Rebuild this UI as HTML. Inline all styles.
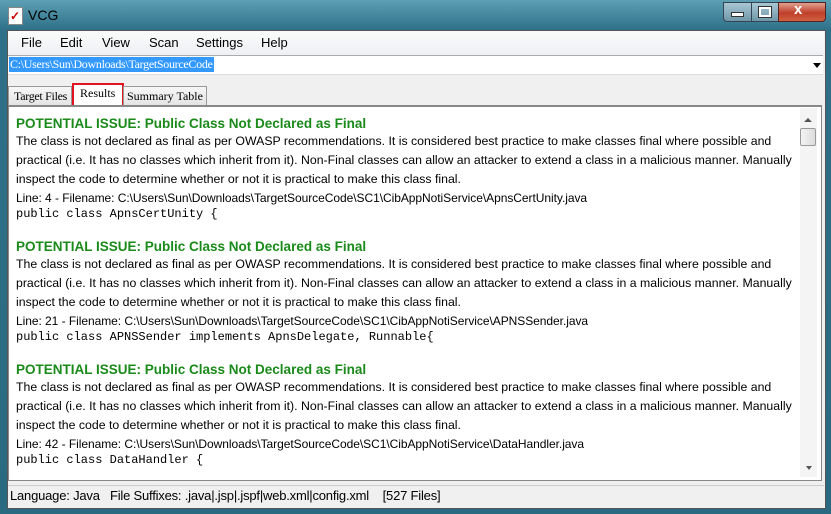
<!DOCTYPE html><html><head><style>
body{margin:0;width:831px;height:514px;overflow:hidden;background:#2f6e84;font-family:"Liberation Sans",sans-serif;position:relative}
.abs{position:absolute}
#frame{left:0;top:0;width:831px;height:514px;background:linear-gradient(#5d9fb3,#2e7088 30px,#2a6a80);}
#client{left:7px;top:30px;width:817px;height:477px;background:#f0f0f0;border:1px solid #555}
.t{position:absolute;white-space:nowrap}
.tx{font-size:12.3px;color:#000;left:16px}
.h{font-size:13.5px;font-weight:bold;color:#1a8a1a;left:16px}
.ln{font-size:12px;left:16px;letter-spacing:-0.05px}
.cd{font-family:"Liberation Mono",monospace;font-size:12px;left:16px}
</style></head><body>
<div class="abs" id="frame"></div>
<div class="abs" style="left:8px;top:7px;width:13px;height:16px;background:#fff;border:1px solid #888"></div>
<div class="abs" style="left:10px;top:9px;color:#c00;font-size:12px;font-weight:bold">✓</div>
<div class="t" style="left:28px;top:7px;font-size:14px;color:#000">VCG</div>
<div class="abs" style="left:723px;top:2px;width:27px;height:18px;border:1px solid #345;border-radius:0 0 0 4px;background:linear-gradient(#a9c6d3,#6f97a8)"></div>
<div class="abs" style="left:731px;top:12px;width:11px;height:3px;background:#fff;border:1px solid #333"></div>
<div class="abs" style="left:751px;top:2px;width:26px;height:18px;border:1px solid #345;background:linear-gradient(#a9c6d3,#6f97a8)"></div>
<div class="abs" style="left:759px;top:7px;width:8px;height:6px;border:2px solid #fff;outline:1px solid #333"></div>
<div class="abs" style="left:778px;top:2px;width:46px;height:18px;border:1px solid #522;border-radius:0 0 4px 0;background:linear-gradient(#e0a090,#c0402a 55%,#d06040)"></div>
<div class="t" style="left:794px;top:1px;color:#fff;font-weight:bold;font-size:15px">x</div>
<div class="abs" id="client"></div>
<div class="abs" style="left:8px;top:31px;width:816px;height:24px;background:linear-gradient(#fbfbfb,#eef0f3)"></div>
<div class="t" style="left:21px;top:35px;font-size:13px">File</div>
<div class="t" style="left:60px;top:35px;font-size:13px">Edit</div>
<div class="t" style="left:102px;top:35px;font-size:13px">View</div>
<div class="t" style="left:149px;top:35px;font-size:13px">Scan</div>
<div class="t" style="left:196px;top:35px;font-size:13px">Settings</div>
<div class="t" style="left:261px;top:35px;font-size:13px">Help</div>
<div class="abs" style="left:8px;top:55px;width:815px;height:18px;background:#fff;border-top:1px solid #aaa;border-bottom:1px solid #ddd"></div>
<div class="t" style="left:9px;top:57px;font-family:'Liberation Serif',serif;font-size:12px;background:#3399ff;color:#fff;padding:0 1px;letter-spacing:-0.3px">C:\Users\Sun\Downloads\TargetSourceCode</div>
<div class="abs" style="left:813px;top:63px;width:0;height:0;border-left:4px solid transparent;border-right:4px solid transparent;border-top:5px solid #000"></div>
<div class="abs" style="left:8px;top:86px;width:62px;height:19px;background:linear-gradient(#f7f7f7,#e3e3e3);border:1px solid #999;border-bottom:none"></div>
<div class="t" style="left:14px;top:89px;font-family:'Liberation Serif',serif;font-size:12px;letter-spacing:-0.3px">Target Files</div>
<div class="abs" style="left:72px;top:83px;width:48px;height:21px;background:#fff;border:2px solid #e0141e"></div>
<div class="t" style="left:80px;top:86px;font-family:'Liberation Serif',serif;font-size:12px">Results</div>
<div class="abs" style="left:123px;top:86px;width:82px;height:19px;background:linear-gradient(#f7f7f7,#e3e3e3);border:1px solid #999;border-bottom:none"></div>
<div class="t" style="left:127px;top:89px;font-family:'Liberation Serif',serif;font-size:12px">Summary Table</div>
<div class="abs" style="left:8px;top:105px;width:812px;height:373px;background:#fff;border:1px solid #888;border-top:2px solid #888"></div>
<div id="c"></div>
<div class="abs" style="left:800px;top:108px;width:17px;height:369px;background:#f4f4f4"></div>
<div class="abs" style="left:804px;top:118px;width:0;height:0;border-left:4px solid transparent;border-right:4px solid transparent;border-bottom:4px solid #555"></div>
<div class="abs" style="left:800px;top:128px;width:14px;height:16px;background:linear-gradient(90deg,#f3f3f3,#dcdcdc);border:1px solid #999;border-radius:2px"></div>
<div class="abs" style="left:806px;top:466px;width:0;height:0;border-left:3px solid transparent;border-right:3px solid transparent;border-top:4px solid #555"></div>
<div class="abs" style="left:8px;top:485px;width:816px;height:21px;background:#f0f0f0;border-top:1px solid #ccc"></div>
<div class="t" style="left:10px;top:488px;font-size:13px;letter-spacing:-0.2px">Language: Java&nbsp;&nbsp; File Suffixes: .java|.jsp|.jspf|web.xml|config.xml&nbsp;&nbsp;&nbsp; [527 Files]</div>
<script>
var d=[[4,"ApnsCertUnity","public class ApnsCertUnity {"],[21,"APNSSender","public class APNSSender implements ApnsDelegate, Runnable{"],[42,"DataHandler","public class DataHandler {"]],h="";
d.forEach(function(b,i){var y=116+i*123;
h+='<div class="t h" style="top:'+y+'px">POTENTIAL ISSUE: Public Class Not Declared as Final</div>';
h+='<div class="t tx" style="top:'+(y+18)+'px">The class is not declared as final as per OWASP recommendations. It is considered best practice to make classes final where possible and</div>';
h+='<div class="t tx" style="top:'+(y+37)+'px">practical (i.e. It has no classes which inherit from it). Non-Final classes can allow an attacker to extend a class in a malicious manner. Manually</div>';
h+='<div class="t tx" style="top:'+(y+56)+'px">inspect the code to determine whether or not it is practical to make this class final.</div>';
h+='<div class="t ln" style="top:'+(y+75)+'px">Line: '+b[0]+' - Filename: C:\\Users\\Sun\\Downloads\\TargetSourceCode\\SC1\\CibAppNotiService\\'+b[1]+'.java</div>';
h+='<div class="t cd" style="top:'+(y+91)+'px">'+b[2]+'</div>';});
document.getElementById('c').innerHTML=h;
</script>
</body></html>
